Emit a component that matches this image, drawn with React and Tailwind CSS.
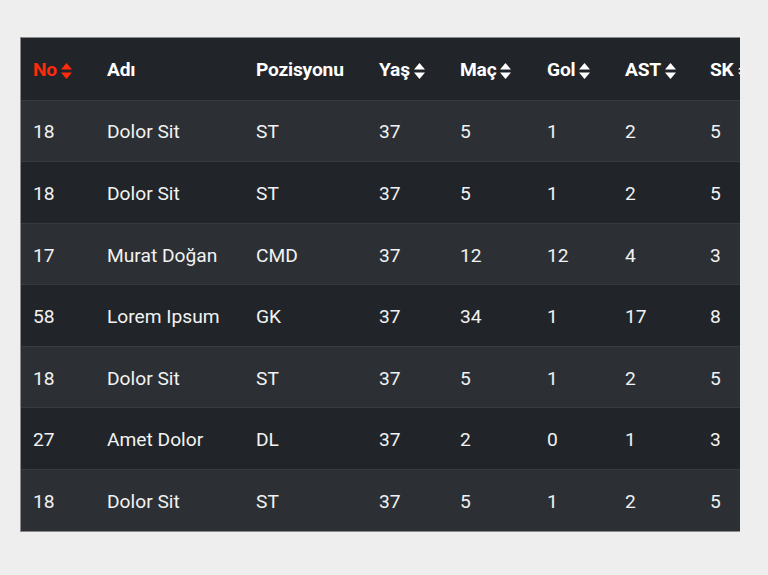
const columns = [
    { key: "no", label: "No", width: "w-[74px]", sort: true, active: true },
    { key: "name", label: "Adı", width: "w-[149px]" },
    { key: "pos", label: "Pozisyonu", width: "w-[123px]" },
    { key: "age", label: "Yaş", width: "w-[81px]", sort: true },
    { key: "games", label: "Maç", width: "w-[87px]", sort: true },
    { key: "goals", label: "Gol", width: "w-[78px]", sort: true },
    { key: "ast", label: "AST", width: "w-[85px]", sort: true },
    { key: "sk", label: "SK", width: "w-[90px]", sort: true },
]

const players = [
    { no: 18, name: "Dolor Sit", pos: "ST", age: 37, games: 5, goals: 1, ast: 2, sk: 5 },
    { no: 18, name: "Dolor Sit", pos: "ST", age: 37, games: 5, goals: 1, ast: 2, sk: 5 },
    { no: 17, name: "Murat Doğan", pos: "CMD", age: 37, games: 12, goals: 12, ast: 4, sk: 3 },
    { no: 58, name: "Lorem Ipsum", pos: "GK", age: 37, games: 34, goals: 1, ast: 17, sk: 8 },
    { no: 18, name: "Dolor Sit", pos: "ST", age: 37, games: 5, goals: 1, ast: 2, sk: 5 },
    { no: 27, name: "Amet Dolor", pos: "DL", age: 37, games: 2, goals: 0, ast: 1, sk: 3 },
    { no: 18, name: "Dolor Sit", pos: "ST", age: 37, games: 5, goals: 1, ast: 2, sk: 5 },
]

function SortIcon() {
    return (
        <svg width="11" height="16" viewBox="0 0 11 16" fill="currentColor" className="ml-[4px] inline-block">
            <path d="M5.5 0 L11 6.5 H0 Z" />
            <path d="M0 9.5 H11 L5.5 16 Z" />
        </svg>
    )
}

export default function App() {
    return (
        <div className="min-h-[575px] w-[768px] bg-[#eeeeee] pt-[37px] pl-[20px] font-['Roboto',sans-serif]">
            <div className="w-[720px] overflow-hidden border-l border-t border-b border-[#8a8a8a]">
                <table className="table-fixed border-collapse w-[767px] text-[19.2px]">
                    <thead>
                        <tr className="h-[62px] bg-[#212529]">
                            {columns.map((c) => (
                                <th
                                    key={c.key}
                                    className={`${c.width} px-[12px] pt-[4px] text-left font-bold whitespace-nowrap ${
                                        c.active ? "text-[#ff2a0c]" : "text-white"
                                    }`}
                                >
                                    <span className="inline-flex items-center tracking-[-0.2px]">
                                        {c.label}
                                        {c.sort && <SortIcon />}
                                    </span>
                                </th>
                            ))}
                        </tr>
                    </thead>
                    <tbody>
                        {players.map((p, i) => (
                            <tr
                                key={i}
                                className={`h-[61.6px] border-t border-[#373b3e] ${
                                    i % 2 === 0 ? "bg-[#2c3034]" : "bg-[#212529]"
                                }`}
                            >
                                {columns.map((c) => (
                                    <td key={c.key} className="px-[12px] pt-[4px] text-[#f2f2f2] whitespace-nowrap">
                                        {p[c.key]}
                                    </td>
                                ))}
                            </tr>
                        ))}
                    </tbody>
                </table>
            </div>
        </div>
    )
}
